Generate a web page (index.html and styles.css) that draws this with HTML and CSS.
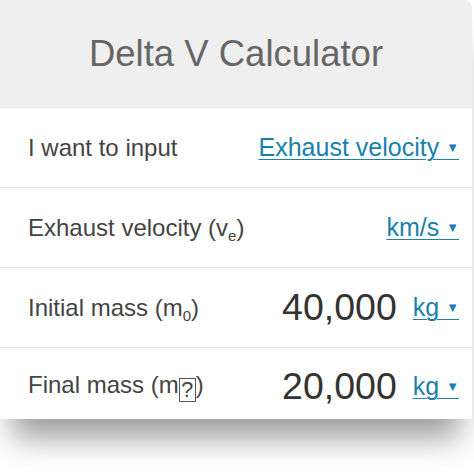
FILE: index.html
```html
<!DOCTYPE html>
<html lang="en">
<head>
    <meta charset="UTF-8">
    <meta name="viewport" content="width=device-width, initial-scale=1.0">
    <title>Delta V Calculator</title>
    <link rel="stylesheet" href="styles.css">
</head>
<body>
    <div class="calculator">
        <h1 class="calc-title">Delta V Calculator</h1>

        <div class="calc-row">
            <span class="row-label">I want to input</span>
            <a class="unit-link" href="#">Exhaust velocity <span class="caret">▼</span></a>
        </div>

        <div class="calc-row">
            <span class="row-label">Exhaust velocity (v<sub>e</sub>)</span>
            <a class="unit-link" href="#">km/s <span class="caret">▼</span></a>
        </div>

        <div class="calc-row">
            <span class="row-label">Initial mass (m<sub>0</sub>)</span>
            <div class="row-value">
                <span class="number">40,000</span>
                <a class="unit-link" href="#">kg <span class="caret">▼</span></a>
            </div>
        </div>

        <div class="calc-row last">
            <span class="row-label">Final mass (m<span class="missing">?</span>)</span>
            <div class="row-value">
                <span class="number">20,000</span>
                <a class="unit-link" href="#">kg <span class="caret">▼</span></a>
            </div>
        </div>
    </div>
</body>
</html>
```

FILE: styles.css
```css
* {
    box-sizing: border-box;
    margin: 0;
    padding: 0;
}

body {
    font-family: 'Liberation Sans', Arial, sans-serif;
    background: #ffffff;
    width: 474px;
    height: 474px;
    overflow: hidden;
}

.calculator {
    width: 472px;
    background: #ffffff;
    border-radius: 0 8px 0 0;
    box-shadow: 0 30px 30px -12px rgba(0, 0, 0, 0.4);
}

.calc-title {
    height: 107px;
    background: #efefef;
    border-radius: 0 8px 0 0;
    color: #666666;
    font-size: 36.5px;
    font-weight: 400;
    text-align: center;
    line-height: 108px;
}

.calc-row {
    height: 80px;
    display: flex;
    align-items: center;
    justify-content: space-between;
    padding: 0 13px 0 28px;
    border-top: 1px solid #e9e9e9;
}

.calc-row.last {
    height: 72px;
    padding-top: 6px;
}

.row-label {
    font-size: 24px;
    color: #444444;
}

sub {
    font-size: 15px;
    vertical-align: -5px;
    line-height: 0;
}

.missing {
    display: inline-block;
    width: 17px;
    height: 24px;
    border: 1px solid #555555;
    font-size: 22px;
    line-height: 22px;
    text-align: center;
    vertical-align: -4px;
}

.unit-link {
    font-size: 25px;
    color: #1a80ac;
    text-decoration: underline;
    text-underline-offset: 3px;
    text-decoration-thickness: 1px;
}

.caret {
    font-size: 13px;
    vertical-align: 4px;
}

.row-value {
    display: flex;
    align-items: center;
    gap: 16px;
}

.number {
    font-size: 37.5px;
    color: #333333;
}
```
